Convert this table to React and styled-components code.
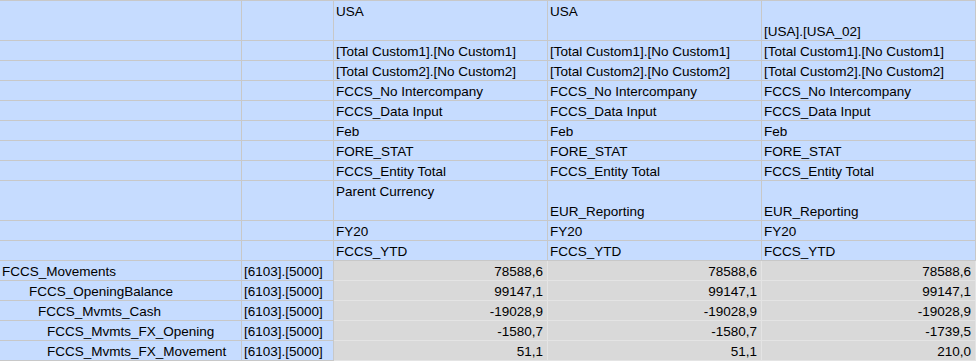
import React from "react";
import styled, { createGlobalStyle } from "styled-components";

const GlobalStyle = createGlobalStyle`
  body {
    margin: 0;
    background: #ffffff;
  }
`;

const Sheet = styled.div`
  display: grid;
  grid-template-columns: 242px 92px repeat(3, 214px);
  width: 976px;
  border-top: 1px solid #c8c8c8;
  font-family: "Liberation Sans", Arial, sans-serif;
  font-size: 13.5px;
  color: #000000;
`;

const Cell = styled.div`
  box-sizing: border-box;
  height: ${(p) => (p.$tall ? 40 : 20)}px;
  padding-top: ${(p) => (p.$bottom ? 23 : 3)}px;
  padding-left: ${(p) => p.$indent ?? 2}px;
  padding-right: 4px;
  line-height: 16px;
  white-space: nowrap;
  overflow: hidden;
  text-align: ${(p) => (p.$num ? "right" : "left")};
  background: ${(p) => (p.$data ? "#d9d9d9" : "#c6dcff")};
  border-right: 1px solid ${(p) => (p.$data ? "#e4e4e4" : "#c8c8c8")};
  border-bottom: 1px solid ${(p) => (p.$data ? "#e4e4e4" : "#c8c8c8")};
`;

// header rows: three column members, optional tall row with top / bottom placement
const headerRows = [
  { tall: true, cols: [["USA", "top"], ["USA", "top"], ["[USA].[USA_02]", "bottom"]] },
  { cols: ["[Total Custom1].[No Custom1]"] },
  { cols: ["[Total Custom2].[No Custom2]"] },
  { cols: ["FCCS_No Intercompany"] },
  { cols: ["FCCS_Data Input"] },
  { cols: ["Feb"] },
  { cols: ["FORE_STAT"] },
  { cols: ["FCCS_Entity Total"] },
  {
    tall: true,
    cols: [["Parent Currency", "top"], ["EUR_Reporting", "bottom"], ["EUR_Reporting", "bottom"]],
  },
  { cols: ["FY20"] },
  { cols: ["FCCS_YTD"] },
];

const dataRows = [
  { label: "FCCS_Movements", indent: 2, values: ["78588,6", "78588,6", "78588,6"] },
  { label: "FCCS_OpeningBalance", indent: 29, values: ["99147,1", "99147,1", "99147,1"] },
  { label: "FCCS_Mvmts_Cash", indent: 38, values: ["-19028,9", "-19028,9", "-19028,9"] },
  { label: "FCCS_Mvmts_FX_Opening", indent: 47, values: ["-1580,7", "-1580,7", "-1739,5"] },
  { label: "FCCS_Mvmts_FX_Movement", indent: 47, values: ["51,1", "51,1", "210,0"] },
];

function HeaderRow({ row }) {
  const cols =
    row.cols.length === 1 ? [row.cols[0], row.cols[0], row.cols[0]] : row.cols;
  return (
    <>
      <Cell $tall={row.tall} />
      <Cell $tall={row.tall} />
      {cols.map((c, i) => {
        const [text, place] = Array.isArray(c) ? c : [c, "top"];
        return (
          <Cell key={i} $tall={row.tall} $bottom={place === "bottom"}>
            {text}
          </Cell>
        );
      })}
    </>
  );
}

function DataRow({ row }) {
  return (
    <>
      <Cell $indent={row.indent}>{row.label}</Cell>
      <Cell>[6103].[5000]</Cell>
      {row.values.map((v, i) => (
        <Cell key={i} $data $num>
          {v}
        </Cell>
      ))}
    </>
  );
}

export default function App() {
  return (
    <>
      <GlobalStyle />
      <Sheet>
        {headerRows.map((r, i) => (
          <HeaderRow key={"h" + i} row={r} />
        ))}
        {dataRows.map((r, i) => (
          <DataRow key={"d" + i} row={r} />
        ))}
      </Sheet>
    </>
  );
}
